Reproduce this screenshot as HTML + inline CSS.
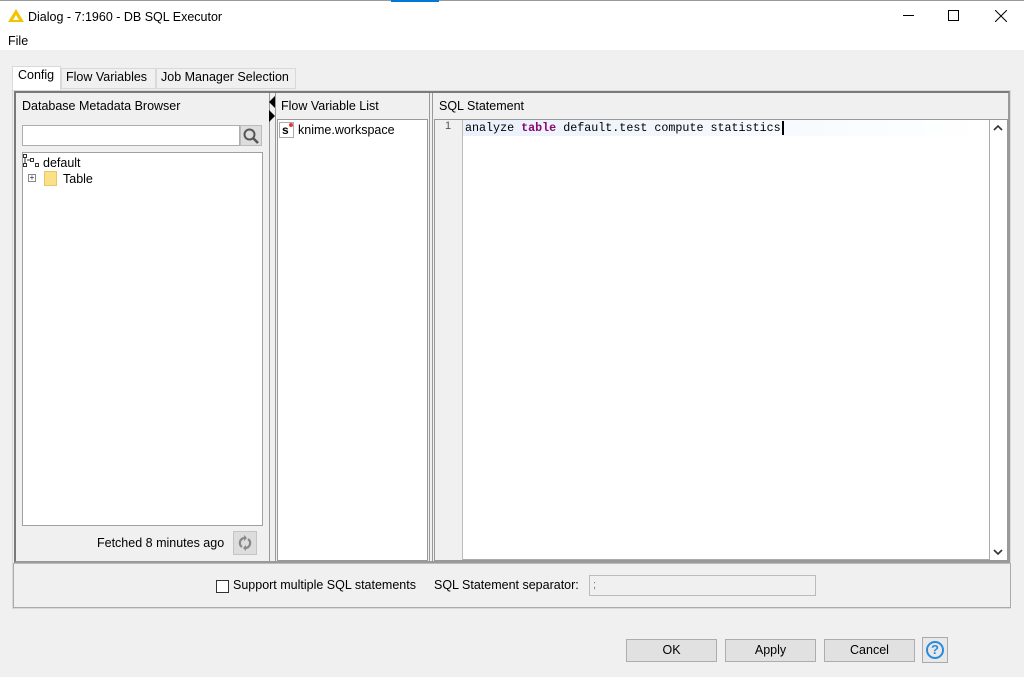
<!DOCTYPE html>
<html><head><style>
*{margin:0;padding:0;box-sizing:border-box}
body{width:1024px;height:677px;background:#f0f0f0;font-family:"Liberation Sans",sans-serif;font-size:12.5px;color:#000;position:relative;overflow:hidden}
.a{position:absolute}
.mono{font-family:"Liberation Mono",monospace;font-size:11.7px}
.btn{position:absolute;top:639px;height:23px;width:91px;border:1px solid #adadad;background:#e1e1e1;text-align:center;line-height:21px;font-size:12.5px}
</style></head><body>
<div class="a" style="left:0;top:0;width:1024px;height:50px;background:#fff"></div>
<div class="a" style="left:0;top:0;width:1024px;height:1px;background:#999"></div>
<div class="a" style="left:391px;top:0;width:48px;height:2px;background:#0078d7"></div>
<svg class="a" style="left:8px;top:9px" width="16" height="13"><polygon points="8,0 16,13 0,13" fill="#f5c400"/><polygon points="8,6 11,11 5,11" fill="#fff"/></svg>
<div class="a" style="left:28px;top:10px;font-size:12.5px">Dialog - 7:1960 - DB SQL Executor</div>
<div class="a" style="left:903px;top:15px;width:11px;height:1px;background:#000"></div>
<div class="a" style="left:948px;top:10px;width:11px;height:11px;border:1px solid #000"></div>
<svg class="a" style="left:995px;top:10px" width="12" height="12"><path d="M0 0L12 12M12 0L0 12" stroke="#000" stroke-width="1"/></svg>
<div class="a" style="left:8px;top:34px">File</div>

<div class="a" style="left:12px;top:66px;width:49px;height:25px;background:#fff;border:1px solid #d9d9d9;border-bottom:none"></div>
<div class="a" style="left:18px;top:68px">Config</div>
<div class="a" style="left:61px;top:68px;width:95px;height:21px;border:1px solid #d9d9d9;background:#f0f0f0"></div>
<div class="a" style="left:66px;top:70px">Flow Variables</div>
<div class="a" style="left:156px;top:68px;width:140px;height:21px;border:1px solid #d9d9d9;background:#f0f0f0"></div>
<div class="a" style="left:161px;top:70px">Job Manager Selection</div>

<div class="a" style="left:12px;top:90px;width:999px;height:519px;border:1px solid #d9d9d9"></div>
<div class="a" style="left:14px;top:91px;width:996px;height:472px;border:2px solid #7a7a7a;border-right-color:#9a9a9a;border-bottom-color:#9a9a9a"></div>
<div class="a" style="left:16px;top:93px;width:254px;height:468px;border-right:1px solid #999"></div>
<div class="a" style="left:275px;top:93px;width:1px;height:468px;background:#999"></div>
<div class="a" style="left:429px;top:93px;width:1px;height:468px;background:#999"></div>
<div class="a" style="left:432px;top:93px;width:1px;height:468px;background:#999"></div>
<svg class="a" style="left:268px;top:96px" width="8" height="26"><polygon points="7,0 7,12 1,6" fill="#000"/><polygon points="1,14 1,26 7,20" fill="#000"/></svg>

<div class="a" style="left:22px;top:99px">Database Metadata Browser</div>
<div class="a" style="left:22px;top:125px;width:218px;height:21px;background:#fff;border:1px solid #adadad"></div>
<div class="a" style="left:240px;top:125px;width:22px;height:21px;background:#ddd;border:1px solid #bbb"></div>
<svg class="a" style="left:243px;top:128px" width="17" height="16"><circle cx="6.5" cy="6.5" r="5" fill="none" stroke="#555" stroke-width="2"/><path d="M10 10L15 15" stroke="#555" stroke-width="2.5"/></svg>
<div class="a" style="left:22px;top:152px;width:241px;height:374px;background:#fff;border:1px solid #a0a0a0"></div>
<svg class="a" style="left:23px;top:154px" width="18" height="14"><rect x="0.5" y="0.5" width="3" height="3" fill="none" stroke="#333"/><rect x="0.5" y="9.5" width="3" height="3" fill="none" stroke="#333"/><rect x="7.5" y="4.5" width="3" height="3" fill="none" stroke="#333"/><rect x="12.5" y="9.5" width="3" height="3" fill="none" stroke="#333"/><path d="M2 4V9M4 6H7" stroke="#333"/></svg>
<div class="a" style="left:43px;top:156px">default</div>
<div class="a" style="left:28px;top:174px;width:8px;height:8px;border:1px solid #888;background:#fff;font-size:8px;line-height:6px;text-align:center;color:#225">+</div>
<div class="a" style="left:44px;top:171px;width:13px;height:15px;background:#fbe08a;border:1px solid #e8c860"></div>
<div class="a" style="left:63px;top:172px">Table</div>
<div class="a" style="left:97px;top:536px">Fetched 8 minutes ago</div>
<div class="a" style="left:233px;top:531px;width:24px;height:24px;background:#ddd;border:1px solid #c4c4c4"></div>
<svg class="a" style="left:238px;top:535px" width="14" height="16"><path d="M4 12A5 5 0 0 1 6 3" fill="none" stroke="#888" stroke-width="2.2"/><path d="M10 4A5 5 0 0 1 8 13" fill="none" stroke="#888" stroke-width="2.2"/><polygon points="6,0 9,3 6,6" fill="#888"/><polygon points="8,10 5,13 8,16" fill="#888"/></svg>

<div class="a" style="left:281px;top:99px">Flow Variable List</div>
<div class="a" style="left:277px;top:119px;width:151px;height:442px;background:#fff;border:1px solid #999"></div>
<div class="a" style="left:279px;top:122px;width:15px;height:16px;border:1px solid #aaa;background:#fff;font-weight:bold;font-size:12px;line-height:15px;text-indent:2px">s</div>
<div class="a" style="left:289px;top:123px;width:4px;height:4px;border-radius:2px;background:#e33"></div>
<div class="a" style="left:298px;top:123px">knime.workspace</div>

<div class="a" style="left:439px;top:99px">SQL Statement</div>
<div class="a" style="left:434px;top:119px;width:574px;height:442px;background:#fff;border:1px solid #999"></div>
<div class="a" style="left:435px;top:120px;width:28px;height:440px;background:#f0f0f0;border-right:1px solid #bbb"></div>
<div class="a" style="left:463px;top:120px;width:527px;height:440px;background:#fff;border-right:1px solid #aaa;border-bottom:1px solid #aaa"></div>
<div class="a" style="left:463px;top:120px;width:520px;height:16px;background:linear-gradient(90deg,#eaf1fb,#fff)"></div>
<div class="a" style="left:445px;top:120px;font-size:11px;color:#555">1</div>
<div class="a mono" style="left:465px;top:121px">analyze <span style="color:#8b0a6e;font-weight:bold">table</span> default.test compute statistics</div>
<div class="a" style="left:782px;top:121px;width:2px;height:14px;background:#000"></div>
<svg class="a" style="left:993px;top:124px" width="10" height="8"><path d="M1 6L5 2L9 6" fill="none" stroke="#333" stroke-width="1.6"/></svg>
<svg class="a" style="left:993px;top:548px" width="10" height="8"><path d="M1 2L5 6L9 2" fill="none" stroke="#333" stroke-width="1.6"/></svg>

<div class="a" style="left:13px;top:563px;width:998px;height:45px;border:1px solid #aaa;border-top:1px solid #bbb"></div>
<div class="a" style="left:216px;top:580px;width:13px;height:13px;border:1px solid #333;background:#fff"></div>
<div class="a" style="left:233px;top:578px">Support multiple SQL statements</div>
<div class="a" style="left:434px;top:578px">SQL Statement separator:</div>
<div class="a" style="left:589px;top:575px;width:227px;height:21px;border:1px solid #bbb;background:#f0f0f0;font-size:11px;color:#777;padding-left:3px;line-height:19px">;</div>

<div class="btn" style="left:626px">OK</div>
<div class="btn" style="left:725px">Apply</div>
<div class="btn" style="left:824px">Cancel</div>
<div class="a" style="left:922px;top:637px;width:26px;height:26px;border:1px solid #aaa;background:#e8e8e8"></div>
<div class="a" style="left:926px;top:641px;width:18px;height:18px;border:2px solid #2a8bdc;border-radius:50%;color:#2a8bdc;font-size:13px;font-weight:bold;text-align:center;line-height:14px">?</div>
</body></html>
